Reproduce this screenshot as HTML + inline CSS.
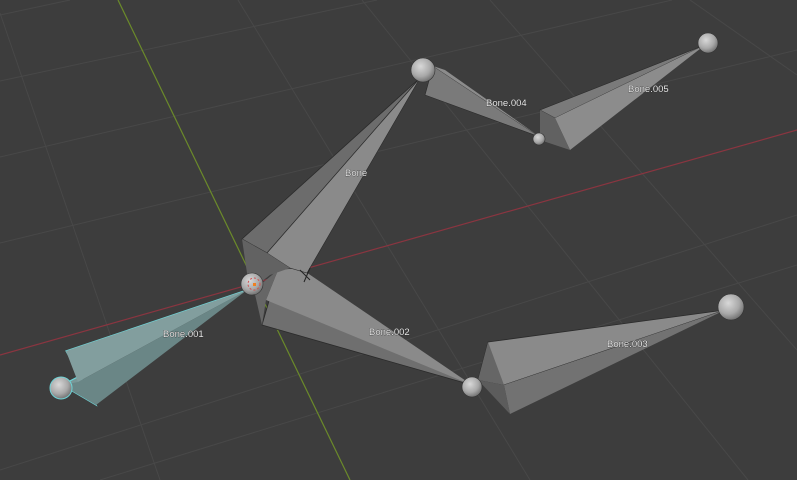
<!DOCTYPE html>
<html><head><meta charset="utf-8"><style>
html,body{margin:0;padding:0;background:#3d3d3d;overflow:hidden;width:797px;height:480px}
svg{display:block;position:absolute;left:0;top:0}
text{font-family:"Liberation Sans",sans-serif;font-size:9.5px;fill:#e8e8e8;stroke:#222;stroke-width:.6px;paint-order:stroke}
</style></head><body>
<svg width="797" height="480" viewBox="0 0 797 480" xmlns="http://www.w3.org/2000/svg">
<defs>
<radialGradient id="sp" cx="0.4" cy="0.35" r="0.7">
<stop offset="0" stop-color="#d8d8d8"/><stop offset="0.6" stop-color="#a8a8a8"/><stop offset="1" stop-color="#6a6a6a"/>
</radialGradient>
</defs>
<rect width="797" height="480" fill="#3d3d3d"/>
<g stroke="#484848" stroke-width="1" fill="none">
<line x1="0" y1="15" x2="70" y2="0"/>
<line x1="0" y1="81" x2="377" y2="0"/>
<line x1="0" y1="157" x2="672" y2="0"/>
<line x1="0" y1="243" x2="797" y2="50"/>
<line x1="0" y1="470" x2="797" y2="215"/>
<line x1="100" y1="480" x2="797" y2="265"/>
<line x1="0" y1="13" x2="160" y2="480"/>
<line x1="238" y1="0" x2="530" y2="480"/>
<line x1="362" y1="0" x2="748" y2="480"/>
<line x1="490" y1="0" x2="797" y2="350"/>
<line x1="690" y1="0" x2="797" y2="75"/>
</g>
<line x1="0" y1="355" x2="797" y2="130" stroke="#8a3540" stroke-width="1.2"/>
<line x1="118" y1="0" x2="350" y2="480" stroke="#6b8a2a" stroke-width="1.2"/>

<polygon points="278,270 262,325 472,385" fill="#6f6f6f" stroke="#2a2a2a" stroke-width="0.8"/>
<polygon points="278,270 300,268 472,385 266,300" fill="#8a8a8a"/>
<polygon points="262,325 254,290 278,270 266,300" fill="#666"/>
<polygon points="242,239 420,78 267,253" fill="#6c6c6c" stroke="#2a2a2a" stroke-width="0.8"/>
<polygon points="267,253 420,78 307,273 290,268" fill="#8a8a8a" stroke="#2a2a2a" stroke-width="0.6"/>
<polygon points="242,239 267,253 290,268 270,275 256,286 248,280" fill="#626262"/>
<polygon points="488,342 725,310 504,385 478,380" fill="#8a8a8a" stroke="#2a2a2a" stroke-width="0.8"/>
<polygon points="504,385 725,310 510,414" fill="#727272"/>
<polygon points="488,342 478,380 504,385" fill="#666"/>
<polygon points="478,380 504,385 510,414" fill="#5c5c5c"/>
<polygon points="425,95 433,66 540,137" fill="#7a7a7a" stroke="#2a2a2a" stroke-width="0.6"/>
<polygon points="433,66 445,70 540,137" fill="#8c8c8c"/>
<polygon points="540,110 705,45 555,118" fill="#7a7a7a" stroke="#2a2a2a" stroke-width="0.6"/>
<polygon points="555,118 705,45 570,150" fill="#8c8c8c"/>
<polygon points="540,110 555,118 570,150 540,140" fill="#616161"/>
<polygon points="66,351 247,290 62,385 96,405" fill="#7a9696" stroke="#6fd3d6" stroke-width="1.2"/>
<polygon points="66,351 247,290 78,382" fill="#829e9e"/>
<polygon points="62,385 78,382 247,290 96,405" fill="#6a8686"/>
<circle cx="61" cy="388" r="11" fill="url(#sp)" stroke="#6fd3d6" stroke-width="1"/>
<circle cx="252" cy="284" r="11" fill="url(#sp)" stroke="#333" stroke-width="0.6"/>
<circle cx="254" cy="284" r="6" fill="none" stroke="#d05050" stroke-width="1" stroke-dasharray="2,2"/>
<rect x="253" y="283" width="3" height="3" fill="#f08020"/>
<circle cx="423" cy="70" r="12" fill="url(#sp)" stroke="#333" stroke-width="0.6"/>
<circle cx="539" cy="139" r="6" fill="url(#sp)" stroke="#333" stroke-width="0.6"/>
<circle cx="708" cy="43" r="10" fill="url(#sp)" stroke="#333" stroke-width="0.6"/>
<circle cx="472" cy="387" r="10" fill="url(#sp)" stroke="#333" stroke-width="0.6"/>
<circle cx="731" cy="307" r="13" fill="url(#sp)" stroke="#333" stroke-width="0.6"/>
<line x1="300" y1="270" x2="310" y2="280" stroke="#222"/>
<line x1="310" y1="268" x2="304" y2="282" stroke="#222"/>
<text x="345" y="176">Bone</text>
<text x="163" y="337">Bone.001</text>
<text x="369" y="335">Bone.002</text>
<text x="607" y="347">Bone.003</text>
<text x="486" y="106">Bone.004</text>
<text x="628" y="92">Bone.005</text>
</svg>
</body></html>
